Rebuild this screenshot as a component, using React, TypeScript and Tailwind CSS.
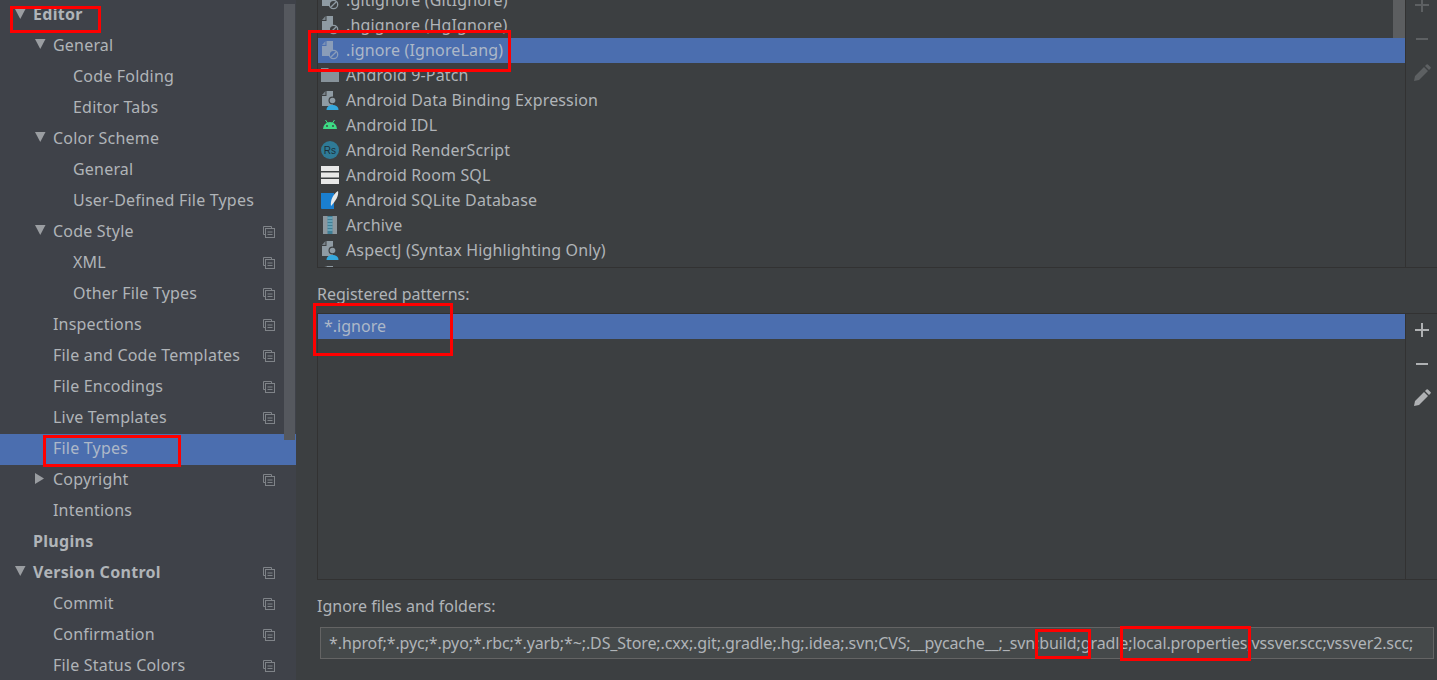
const SIDEBAR_ROWS = [
  { label: "Editor", indent: 33, arrow: "down", bold: true },
  { label: "General", indent: 53, arrow: "down" },
  { label: "Code Folding", indent: 73 },
  { label: "Editor Tabs", indent: 73 },
  { label: "Color Scheme", indent: 53, arrow: "down" },
  { label: "General", indent: 73 },
  { label: "User-Defined File Types", indent: 73 },
  { label: "Code Style", indent: 53, arrow: "down", scope: true },
  { label: "XML", indent: 73, scope: true },
  { label: "Other File Types", indent: 73, scope: true },
  { label: "Inspections", indent: 53, scope: true },
  { label: "File and Code Templates", indent: 53, scope: true },
  { label: "File Encodings", indent: 53, scope: true },
  { label: "Live Templates", indent: 53, scope: true },
  { label: "File Types", indent: 53, selected: true },
  { label: "Copyright", indent: 53, arrow: "right", scope: true },
  { label: "Intentions", indent: 53 },
  { label: "Plugins", indent: 33, bold: true },
  { label: "Version Control", indent: 33, arrow: "down", bold: true, scope: true },
  { label: "Commit", indent: 53, scope: true },
  { label: "Confirmation", indent: 53, scope: true },
  { label: "File Status Colors", indent: 53, scope: true },
];

const FILE_TYPES = [
  { label: ".gitignore (GitIgnore)", icon: "ignore" },
  { label: ".hgignore (HgIgnore)", icon: "ignore" },
  { label: ".ignore (IgnoreLang)", icon: "ignore", selected: true },
  { label: "Android 9-Patch", icon: "folder" },
  { label: "Android Data Binding Expression", icon: "person" },
  { label: "Android IDL", icon: "android" },
  { label: "Android RenderScript", icon: "rs" },
  { label: "Android Room SQL", icon: "room" },
  { label: "Android SQLite Database", icon: "sqlite" },
  { label: "Archive", icon: "archive" },
  { label: "AspectJ (Syntax Highlighting Only)", icon: "person" },
  { label: "", icon: "person" },
];

function ScopeIcon() {
  return (
    <svg width="12" height="12" viewBox="0 0 12 12" fill="none" stroke="#7f8388" strokeWidth="1">
      <path d="M2.5 8.5H.5V.5h8v2" />
      <rect x="2.5" y="2.5" width="9" height="9" fill="#3f4249" />
      <path d="M4.5 6h5M4.5 8.5h5" />
    </svg>
  );
}

function Arrow({ dir }: { dir: string }) {
  return (
    <svg width="11" height="11" viewBox="0 0 11 11" fill="#9a9da1">
      {dir === "down" ? <path d="M0 0h10.500L5.250 10z" /> : <path d="M0 0v11l9-5.500z" />}
    </svg>
  );
}

function FileIcon({ icon, selected }: { icon: string; selected?: boolean }) {
  if (icon === "folder") {
    return (
      <svg width="18" height="18" viewBox="0 0 18 18">
        <path d="M0 2h7l2 2h9v12H0z" fill="#9aa7b0" fillOpacity=".8" />
      </svg>
    );
  }
  if (icon === "android") {
    return (
      <svg width="16" height="16" viewBox="0 0 16 16" fill="#3ddc84">
        <path d="M1 12a7 7 0 0 1 14 0z" />
        <path d="M3.500 3l2 3M12.500 3l-2 3" stroke="#3ddc84" strokeWidth="1" />
        <circle cx="5" cy="9" r=".9" fill="#3c3f41" />
        <circle cx="11" cy="9" r=".9" fill="#3c3f41" />
      </svg>
    );
  }
  if (icon === "rs") {
    return (
      <svg width="18" height="18" viewBox="0 0 18 18">
        <circle cx="9" cy="9" r="9" fill="#2f7a96" />
        <text x="9" y="12.500" textAnchor="middle" fontSize="10" fill="#1d2f38" fontFamily="Liberation Sans">
          Rs
        </text>
      </svg>
    );
  }
  if (icon === "room") {
    return (
      <svg width="18" height="18" viewBox="0 0 18 18" fill="#e8e8e8">
        <rect y="0" width="18" height="5" />
        <rect y="6.500" width="18" height="5" />
        <rect y="13" width="18" height="5" />
      </svg>
    );
  }
  if (icon === "sqlite") {
    return (
      <svg width="18" height="18" viewBox="0 0 18 18">
        <path d="M0 2h13v16H1a1 1 0 0 1-1-1z" fill="#1a7fd0" />
        <path d="M17 0c1 4-2 10-7 15-1-5 2-12 7-15z" fill="#e8e8e8" />
      </svg>
    );
  }
  if (icon === "archive") {
    return (
      <svg width="14" height="18" viewBox="0 0 14 18">
        <rect width="14" height="18" fill="#8c979e" />
        <rect x="4.500" width="5" height="18" fill="#3f7f96" />
        <path d="M4.500 2h5M4.500 5h5M4.500 8h5M4.500 11h5M4.500 14h5" stroke="#8fc3d4" strokeWidth="1" />
      </svg>
    );
  }
  const body = selected ? "#8a9db9" : "#8f9ba3";
  const hole = selected ? "#4b6eaf" : "#3c3f41";
  return (
    <svg width="18" height="20" viewBox="0 0 18 20">
      <path d="M5.500 1H12v15H1V6h4.500z" fill={body} />
      <path d="M1 5l3.500-4v4z" fill={body} fillOpacity=".75" />
      {icon === "ignore" ? (
        <g fill="none" stroke={body} strokeWidth="1.300">
          <circle cx="12.500" cy="14.500" r="4.200" fill={hole} />
          <path d="M9.700 17.200l5.600-5.400" />
        </g>
      ) : (
        <g>
          <circle cx="11.500" cy="10.500" r="4" fill={hole} />
          <circle cx="11.500" cy="10.500" r="2.800" fill={body} />
          <path d="M5.500 20c0-3.500 2.700-5 6-5s6 1.500 6 5z" fill="#35a8dc" />
        </g>
      )}
    </svg>
  );
}

function Toolbar({ dim }: { dim?: boolean }) {
  const c = dim ? "#5d6062" : "#afb1b3";
  return (
    <div className="flex w-[32px] shrink-0 flex-col items-center border-l border-[#323232]">
      <svg className="mt-[9px]" width="14" height="14" viewBox="0 0 14 14" fill={c}>
        <path d="M6 0h2v6h6v2H8v6H6V8H0V6h6z" />
      </svg>
      <svg className="mt-[20px]" width="14" height="14" viewBox="0 0 14 14" fill={c}>
        <path d="M1 6h12v2H1z" />
      </svg>
      <svg className="mt-[18px]" width="18" height="18" viewBox="0 0 18 18" fill={c}>
        <path d="M1 17l1-5L11 3l4 4-9 9zM12 2l1.500-1.500a1 1 0 0 1 1.400 0l2.600 2.600a1 1 0 0 1 0 1.400L16 6z" />
      </svg>
    </div>
  );
}

function RedBox({ className }: { className: string }) {
  return <div className={`pointer-events-none absolute border-[3px] border-[#ff0000] ${className}`} />;
}

export default function App() {
  return (
    <div className="relative flex h-[680px] w-[1437px] overflow-hidden bg-[#3c3f41] text-[16px] text-[#b0b4b8] [font-family:'Noto_Sans',sans-serif]">
      <div className="relative w-[296px] shrink-0 bg-[#3f4249]">
        {SIDEBAR_ROWS.map((row, i) => (
          <div
            key={i}
            className={`relative flex h-[31px] items-center pb-[3px] ${row.selected ? "bg-[#4b6eaf] text-[#adb8c8]" : ""} ${row.bold ? "font-bold tracking-[0.3px]" : "tracking-[0.2px]"}`}
            style={{ paddingLeft: row.indent }}
          >
            {row.arrow && (
              <span className={`absolute ${i === 0 ? "top-[9px]" : "top-[8px]"}`} style={{ left: row.indent - 18 }}>
                <Arrow dir={row.arrow} />
              </span>
            )}
            <span className="whitespace-nowrap">{row.label}</span>
            {row.scope && (
              <span className="absolute left-[263px] top-[9px]">
                <ScopeIcon />
              </span>
            )}
          </div>
        ))}
        <div className="absolute left-[284px] top-[4px] h-[436px] w-[11px] bg-[#55585e]" />
      </div>

      <div className="flex flex-1 flex-col pl-[21px]">
        <div className="flex h-[268px] shrink-0 border-b border-[#323232]">
          <div className="relative flex-1 overflow-hidden border-l border-[#323232]">
            <div className="-mt-[12px] tracking-[0.15px]">
              {FILE_TYPES.map((t, i) => (
                <div key={i} className={`flex h-[25px] items-center pb-[2px] ${t.selected ? "bg-[#4b6eaf] text-[#adb8c8]" : ""}`}>
                  <span className="mr-[4px] flex w-[24px] shrink-0 justify-center">
                    <FileIcon icon={t.icon} selected={t.selected} />
                  </span>
                  <span className="whitespace-nowrap">{t.label}</span>
                </div>
              ))}
            </div>
            <div className="absolute right-0 top-0 h-[38px] w-[12px] bg-[#5c5e60]" />
          </div>
          <div className="-mt-[11px] flex">
            <Toolbar dim />
          </div>
        </div>

        <div className="flex h-[45px] shrink-0 items-center pt-[6px]">Registered patterns:</div>

        <div className="flex h-[267px] shrink-0 border-y border-[#323232]">
          <div className="flex-1 border-l border-[#323232]">
            <div className="flex h-[25px] items-center bg-[#4b6eaf] pb-[2px] pl-[6px] text-[#adb8c8]">*.ignore</div>
          </div>
          <Toolbar />
        </div>

        <div className="flex h-[47px] shrink-0 items-center pt-[4px]">Ignore files and folders:</div>

        <div className="ml-[3px] mr-[3px] flex h-[32px] shrink-0 items-center border border-[#646464] bg-[#45494a] pl-[8px]">
          <span className="whitespace-nowrap tracking-[-0.11px]">
            *.hprof;*.pyc;*.pyo;*.rbc;*.yarb;*~;.DS_Store;.cxx;.git;.gradle;.hg;.idea;.svn;CVS;__pycache__;_svn;build;gradle;local.properties;vssver.scc;vssver2.scc;
          </span>
        </div>
      </div>

      <RedBox className="left-[10px] top-[6px] h-[27px] w-[91px]" />
      <RedBox className="left-[43px] top-[435px] h-[32px] w-[138px]" />
      <RedBox className="left-[308px] top-[30px] h-[42px] w-[203px]" />
      <RedBox className="left-[313px] top-[303px] h-[53px] w-[140px]" />
      <RedBox className="left-[1035px] top-[629px] h-[30px] w-[56px]" />
      <RedBox className="left-[1120px] top-[626px] h-[35px] w-[131px]" />
    </div>
  );
}
